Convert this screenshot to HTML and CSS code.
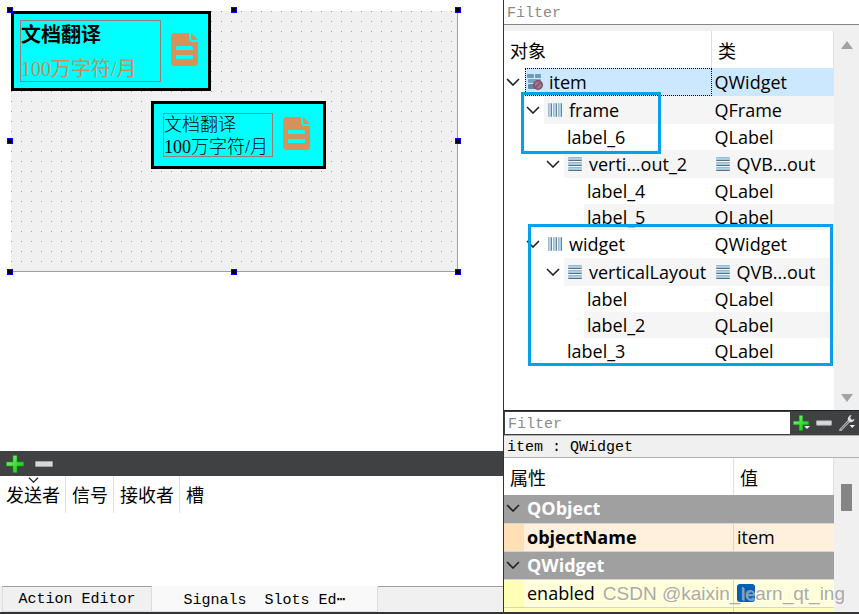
FILE: index.html
```html
<!DOCTYPE html>
<html lang="zh">
<head>
    <meta charset="UTF-8">
    <meta name="viewport" content="width=device-width, initial-scale=1.0">
    <title>item - Qt Designer</title>
    <link rel="stylesheet" href="styles.css">
</head>
<body>
    <!-- shared icons -->
    <svg class="defs" width="0" height="0" aria-hidden="true">
        <defs>
            <linearGradient id="bar" x1="0" y1="0" x2="0" y2="1">
                <stop offset="0" stop-color="#8fb0c6"/>
                <stop offset="0.5" stop-color="#b4dcf4"/>
                <stop offset="1" stop-color="#7c9db5"/>
            </linearGradient>
            <linearGradient id="barv" x1="0" y1="0" x2="1" y2="0">
                <stop offset="0" stop-color="#8fb0c6"/>
                <stop offset="0.5" stop-color="#b9e0f7"/>
                <stop offset="1" stop-color="#88a8bf"/>
            </linearGradient>
            <linearGradient id="green" x1="0" y1="0" x2="1" y2="1">
                <stop offset="0" stop-color="#a4f09a"/>
                <stop offset="0.5" stop-color="#3fe03a"/>
                <stop offset="1" stop-color="#00c800"/>
            </linearGradient>
            <symbol id="i-chevron" viewBox="0 0 14 8">
                <path d="M1 1l6 6 6-6" fill="none" stroke="#222" stroke-width="1.6"/>
            </symbol>
            <symbol id="i-vbox" viewBox="0 0 16 16">
                <g fill="url(#bar)">
                    <rect x="1" y="1" width="14" height="4" rx="1"/>
                    <rect x="1" y="6" width="14" height="4" rx="1"/>
                    <rect x="1" y="11" width="14" height="4" rx="1"/>
                </g>
                <path d="M1.500 4.500h13M1.500 9.500h13M1.500 14.500h13" stroke="#5d7080" stroke-width="1"/>
            </symbol>
            <symbol id="i-hbox" viewBox="0 0 16 16">
                <g fill="url(#barv)">
                    <rect x="1" y="1" width="4" height="14" rx="1"/>
                    <rect x="6" y="1" width="4" height="14" rx="1"/>
                    <rect x="11" y="1" width="4" height="14" rx="1"/>
                </g>
                <path d="M4.500 1.500v13M9.500 1.500v13M14.500 1.500v13" stroke="#6b8092" stroke-width="1"/>
            </symbol>
            <symbol id="i-broken" viewBox="0 0 16 16">
                <rect x="0" y="0" width="7" height="4" rx="1" fill="#6b9abd"/>
                <rect x="8" y="0" width="6" height="4" rx="1" fill="#6b9abd"/>
                <rect x="1" y="5" width="13" height="4" rx="1" fill="#76a5c8"/>
                <rect x="1" y="10" width="9" height="5" rx="1" fill="#5e87a8"/>
                <circle cx="11" cy="11" r="4.200" fill="#8d7f9c" stroke="#94495c" stroke-width="1.600"/>
                <path d="M8.500 13.500l5-5" stroke="#94495c" stroke-width="1.500"/>
            </symbol>
            <symbol id="i-plus" viewBox="0 0 18 18">
                <path d="M7 0.500h4v6.500h6.500v4h-6.500v6.500h-4v-6.500h-6.500v-4h6.500z" fill="url(#green)" stroke="#1fa01c" stroke-width="0.600"/>
            </symbol>
            <symbol id="i-minus" viewBox="0 0 18 18">
                <rect x="0.500" y="6.500" width="17" height="5" rx="0.500" fill="#d8d8d8" stroke="#aaa" stroke-width="0.800"/>
            </symbol>
            <symbol id="i-doc" viewBox="0 0 27 33">
                <path fill="#d69059" fill-rule="evenodd" d="M4 0H18V5Q18 9 22 9H27V29Q27 33 23 33H4Q0 33 0 29V4Q0 0 4 0ZM6 13Q5 13 5 15V17H22V15Q22 13 20 13ZM5 22V26H22V22Z"/>
                <path fill="#d69059" d="M20 0L27 7H21Q20 7 20 5Z"/>
            </symbol>
            <symbol id="i-wrench" viewBox="0 0 16 16">
                <path d="M1.500 15L10 6" stroke="#b4b4b4" stroke-width="2.600" stroke-linecap="round"/>
                <path d="M2 14.500L9.500 6.500" stroke="#55585a" stroke-width="0.900"/>
                <path d="M12.500 0Q8.500 0.800 8.800 5L11 7.300Q15 7.500 15.500 3.800L13 5L11.200 2.800Z" fill="#dcdcdc"/>
                <path d="M10.500 10h5.500l-2.750 3z" fill="#eee"/>
            </symbol>
        </defs>
    </svg>

    <div class="app">
        <main class="left">
            <div class="workspace">
                <div class="form">
                    <div class="card card-frame">
                        <div class="card-text">
                            <div class="card-title">文档翻译</div>
                            <div class="card-sub">100万字符/月</div>
                        </div>
                        <svg class="doc"><use href="#i-doc"/></svg>
                    </div>
                    <div class="card card-widget">
                        <div class="card-text">
                            <div>文档翻译</div>
                            <div>100万字符/月</div>
                        </div>
                        <svg class="doc"><use href="#i-doc"/></svg>
                    </div>
                    <i class="handle top start"></i>
                    <i class="handle top center"></i>
                    <i class="handle top end"></i>
                    <i class="handle middle start"></i>
                    <i class="handle middle end"></i>
                    <i class="handle bottom start"></i>
                    <i class="handle bottom center"></i>
                    <i class="handle bottom end"></i>
                </div>
            </div>

            <section class="signals">
                <div class="toolbar">
                    <button type="button" aria-label="Add"><svg class="icon-lg"><use href="#i-plus"/></svg></button>
                    <button type="button" aria-label="Remove"><svg class="icon-lg"><use href="#i-minus"/></svg></button>
                </div>
                <table class="connections">
                    <thead>
                        <tr>
                            <th>发送者<svg class="sort"><use href="#i-chevron"/></svg></th>
                            <th>信号</th>
                            <th>接收者</th>
                            <th>槽</th>
                        </tr>
                    </thead>
                </table>
                <div class="tabs">
                    <button type="button" class="tab">Action Editor</button>
                    <button type="button" class="tab active">Signals&nbsp; Slots Ed⋯</button>
                    <span class="tabs-rest"></span>
                </div>
            </section>
        </main>

        <aside class="right">
            <section class="inspector">
                <input class="filter" type="text" placeholder="Filter" aria-label="Filter objects">
                <div class="pane">
                    <div class="pane-body">
                        <table class="tree">
                            <colgroup><col><col class="col-class"></colgroup>
                            <thead>
                                <tr><th>对象</th><th>类</th></tr>
                            </thead>
                            <tbody>
                                <tr class="tall selected">
                                    <td class="d0"><svg class="chev"><use href="#i-chevron"/></svg><div class="cell focus"><svg class="icon"><use href="#i-broken"/></svg>item</div></td>
                                    <td><div class="cell">QWidget</div></td>
                                </tr>
                                <tr class="tall alt">
                                    <td class="d1"><svg class="chev"><use href="#i-chevron"/></svg><div class="cell"><svg class="icon"><use href="#i-hbox"/></svg>frame</div></td>
                                    <td><div class="cell">QFrame</div></td>
                                </tr>
                                <tr>
                                    <td class="d2"><div class="cell">label_6</div></td>
                                    <td><div class="cell">QLabel</div></td>
                                </tr>
                                <tr class="tall alt">
                                    <td class="d2"><svg class="chev"><use href="#i-chevron"/></svg><div class="cell"><svg class="icon"><use href="#i-vbox"/></svg>verti...out_2</div></td>
                                    <td><div class="cell"><svg class="icon"><use href="#i-vbox"/></svg>QVB...out</div></td>
                                </tr>
                                <tr>
                                    <td class="d3"><div class="cell">label_4</div></td>
                                    <td><div class="cell">QLabel</div></td>
                                </tr>
                                <tr class="alt">
                                    <td class="d3"><div class="cell">label_5</div></td>
                                    <td><div class="cell">QLabel</div></td>
                                </tr>
                                <tr class="tall">
                                    <td class="d1"><svg class="chev"><use href="#i-chevron"/></svg><div class="cell"><svg class="icon"><use href="#i-hbox"/></svg>widget</div></td>
                                    <td><div class="cell">QWidget</div></td>
                                </tr>
                                <tr class="tall alt">
                                    <td class="d2"><svg class="chev"><use href="#i-chevron"/></svg><div class="cell"><svg class="icon"><use href="#i-vbox"/></svg>verticalLayout</div></td>
                                    <td><div class="cell"><svg class="icon"><use href="#i-vbox"/></svg>QVB...out</div></td>
                                </tr>
                                <tr>
                                    <td class="d3"><div class="cell">label</div></td>
                                    <td><div class="cell">QLabel</div></td>
                                </tr>
                                <tr class="alt">
                                    <td class="d3"><div class="cell">label_2</div></td>
                                    <td><div class="cell">QLabel</div></td>
                                </tr>
                                <tr>
                                    <td class="d2"><div class="cell">label_3</div></td>
                                    <td><div class="cell">QLabel</div></td>
                                </tr>
                            </tbody>
                        </table>
                        <div class="mark mark-frame"></div>
                        <div class="mark mark-widget"></div>
                    </div>
                    <div class="scrollbar">
                        <span class="arrow up"></span>
                        <span class="arrow down"></span>
                    </div>
                </div>
            </section>

            <section class="properties">
                <div class="toolbar prop-bar">
                    <input class="filter" type="text" placeholder="Filter" aria-label="Filter properties">
                    <button type="button" aria-label="Add property"><svg class="icon"><use href="#i-plus"/></svg><i class="caret"></i></button>
                    <button type="button" aria-label="Remove property"><svg class="icon"><use href="#i-minus"/></svg></button>
                    <button type="button" aria-label="Configure"><svg class="icon"><use href="#i-wrench"/></svg></button>
                </div>
                <div class="object-name">item : QWidget</div>
                <div class="pane">
                    <div class="pane-body">
                        <table class="props">
                            <colgroup><col><col class="col-value"></colgroup>
                            <thead>
                                <tr><th>属性</th><th>值</th></tr>
                            </thead>
                            <tbody>
                                <tr class="group">
                                    <td colspan="2"><svg class="chev"><use href="#i-chevron"/></svg>QObject</td>
                                </tr>
                                <tr class="orange">
                                    <td><b>objectName</b></td>
                                    <td>item</td>
                                </tr>
                                <tr class="group">
                                    <td colspan="2"><svg class="chev"><use href="#i-chevron"/></svg>QWidget</td>
                                </tr>
                                <tr class="yellow">
                                    <td><label for="enabled">enabled</label></td>
                                    <td><input type="checkbox" id="enabled" checked></td>
                                </tr>
                                <tr class="yellow next">
                                    <td></td>
                                    <td></td>
                                </tr>
                            </tbody>
                        </table>
                    </div>
                    <div class="scrollbar">
                        <span class="thumb"></span>
                    </div>
                </div>
                <div class="watermark">CSDN @kaixin_learn_qt_ing</div>
            </section>
        </aside>
    </div>
</body>
</html>
```
FILE: styles.css
```css
* {
    box-sizing: border-box;
}
body {
    margin: 0;
    font-family: "Open Sans", "Noto Sans CJK SC", sans-serif;
    font-size: 18px;
    color: #000;
    background: #fff;
}
button {
    padding: 0;
    border: none;
    background: none;
    color: inherit;
}
svg {
    display: block;
    flex: none;
}
.defs {
    position: absolute;
}
.app {
    display: grid;
    grid-template-columns: minmax(0, 1fr) 356px;
    height: 100vh;
    overflow: hidden;
    border-bottom: 2px solid #333234;
}
.left,
.right,
.inspector,
.properties {
    display: flex;
    flex-direction: column;
    min-height: 0;
}
.icon {
    width: 16px;
    height: 16px;
}
.icon-lg {
    width: 18px;
    height: 18px;
}

/* form being edited */
.workspace {
    flex: 1;
    padding: 11px;
}
.form {
    position: relative;
    width: 447px;
    height: 261px;
    border-right: 1px solid #a0a0a0;
    border-bottom: 1px solid #a0a0a0;
    background: #f0f0f0 conic-gradient(from 270deg at 1px 1px, #a0a0a0 90deg, transparent 0) 0 0 / 10px 10px;
}
.card {
    position: absolute;
    display: flex;
    align-items: center;
    gap: 10px;
    border: 3px solid #000;
    background: #0ff;
    font-family: "Liberation Serif", "Noto Sans CJK SC", serif;
    font-size: 18px;
    white-space: nowrap;
}
.card-frame {
    top: 0;
    left: 0;
    width: 200px;
    height: 80px;
    padding: 6px;
    font-size: 20px;
    line-height: 28px;
}
.card-widget {
    top: 90px;
    left: 140px;
    width: 175px;
    height: 68px;
    padding: 9px;
}
.card-text {
    flex: none;
    width: 110px;
    border: 1px solid #967f7b;
}
.card-frame .card-text {
    width: 141px;
    height: 62px;
}
.card-title {
    font-weight: bold;
}
.card-sub {
    padding-top: 6px;
    color: #c98d62;
}
.card-widget .card-text {
    height: 44px;
    font-weight: 300;
    line-height: 22px;
}
.doc {
    width: 27px;
    height: 33px;
    margin-bottom: 3px;
}
.handle {
    position: absolute;
    width: 6px;
    height: 6px;
    border: 1px solid #00f;
    background: #000;
}
.handle.top { top: -4px; }
.handle.middle { top: calc(50% - 3px); }
.handle.bottom { bottom: -4px; }
.handle.start { left: -4px; }
.handle.center { left: calc(50% - 3px); }
.handle.end { right: -4px; }

/* toolbars */
.toolbar {
    display: flex;
    align-items: center;
    gap: 11px;
    height: 25px;
    padding: 0 6px;
    background: #404142;
}
.filter {
    width: 100%;
    height: 25px;
    padding: 3px 3px 0;
    border: none;
    border-bottom: 1px solid #868686;
    border-radius: 0;
    background: #fff;
    font-family: "Liberation Mono", monospace;
    font-size: 15px;
    outline: none;
}
.filter::placeholder {
    color: #8a8a8a;
}

/* signal and slot editor */
.connections {
    border-collapse: separate;
    border-spacing: 0;
}
.connections th {
    position: relative;
    height: 37px;
    padding: 0 5px 0 6px;
    border-right: 1px solid #e0e0e0;
    font-weight: normal;
    line-height: 24px;
}
.connections th:last-child {
    border-right: none;
}
.sort {
    position: absolute;
    top: 1px;
    left: 28px;
    width: 11px;
    height: 6px;
}
.tabs {
    display: flex;
    height: 26px;
    margin-top: 73px;
    padding-left: 2px;
    background: #f0f0f0;
}
.tab,
.tabs-rest {
    border-top: 1px solid #a0a0a0;
}
.tab {
    width: 150px;
    border-right: 1px solid #dcdcdc;
    border-bottom: 1px solid #dcdcdc;
    border-left: 1px solid #dcdcdc;
    background: #f0f0f0;
    font-family: "Liberation Mono", monospace;
    font-size: 15px;
    white-space: nowrap;
}
.tab.active {
    width: 226px;
    border-top-color: #f9f9f9;
    border-left: none;
    background: #f9f9f9;
}
.tabs-rest {
    flex: 1;
}

/* right docks */
.right {
    border-left: 1px solid #333;
    background: #f0f0f0;
}
.inspector {
    flex: 1;
}
.pane {
    display: flex;
    flex: 1;
    min-height: 0;
}
.pane-body {
    position: relative;
    flex: 1;
    overflow: hidden;
    background: #fff;
}
.inspector .pane {
    margin-top: 6px;
}
.tree,
.props {
    width: 100%;
    table-layout: fixed;
    border-collapse: collapse;
    white-space: nowrap;
}
.col-class {
    width: 122px;
}
.col-value {
    width: 100px;
}
th {
    height: 37px;
    padding: 0 6px;
    border-right: 1px solid #e0e0e0;
    font-weight: normal;
    text-align: left;
}
td {
    padding: 0;
}
.tree td {
    position: relative;
    height: 26px;
    line-height: 26px;
}
.tree .tall td {
    height: 28px;
    line-height: 28px;
}
.tree .d0 { padding-left: 20px; }
.tree .d1 { padding-left: 40px; }
.tree .d2 { padding-left: 60px; }
.tree .d3 { padding-left: 80px; }
.cell {
    display: flex;
    align-items: center;
    gap: 6px;
    height: 26px;
    padding-left: 3px;
}
.tall .cell {
    height: 28px;
}
.alt .cell {
    background: #f5f5f5;
}
.selected .cell {
    background: #cce8ff;
}
.cell.focus {
    margin-left: 1px;
    padding-left: 1px;
    border: 1px dotted #000;
}
.chev {
    width: 14px;
    height: 8px;
}
.tree .chev {
    position: absolute;
    top: 10px;
}
.d0 .chev { left: 2px; }
.d1 .chev { left: 22px; }
.d2 .chev { left: 42px; }
.mark {
    position: absolute;
    border: 3px solid #00a2e8;
}
.mark-frame {
    top: 61px;
    left: 17px;
    width: 140px;
    height: 62px;
}
.mark-widget {
    top: 193px;
    left: 24px;
    width: 305px;
    height: 142px;
}
.scrollbar {
    display: flex;
    flex-direction: column;
    align-items: center;
    justify-content: space-between;
    width: 25px;
    padding: 10px 0 8px;
    background: #f0f0f0;
}
.arrow {
    border: 6px solid transparent;
}
.arrow.up {
    border-top: none;
    border-bottom: 8px solid #a3a3a3;
}
.arrow.down {
    border-top: 8px solid #a3a3a3;
    border-bottom: none;
}

/* property editor */
.properties {
    position: relative;
    height: 202px;
}
.prop-bar {
    gap: 7px;
    padding: 1px 4px 1px 1px;
    border-top: 1px solid #222;
}
.prop-bar .filter {
    flex: 1;
    min-width: 0;
    height: 22px;
    margin-right: -4px;
    border-bottom: none;
}
.prop-bar button {
    position: relative;
}
.caret {
    position: absolute;
    right: -1px;
    bottom: 2px;
    border: 3px solid transparent;
    border-top-color: #eee;
    border-bottom: none;
}
.object-name {
    height: 23px;
    padding-left: 3px;
    border: 1px solid #b0b0b0;
    border-right: none;
    border-left: none;
    font-family: "Liberation Mono", monospace;
    font-size: 15px;
    line-height: 23px;
}
.props td {
    height: 28px;
    padding: 0 3px;
    border-right: 1px solid #d4d4d4;
    border-bottom: 1px solid #d4d4d4;
    line-height: 27px;
}
.props td:last-child {
    border-right: none;
}
.props td:first-child {
    padding-left: 23px;
}
.props .group td {
    position: relative;
    background: #a0a0a0;
    color: #fff;
    font-weight: bold;
}
.props .chev {
    position: absolute;
    top: 9px;
    left: 2px;
}
.orange td {
    background: #fff0de;
}
.orange td:first-child {
    background: linear-gradient(to right, #ffdfb5 20px, #fff0de 20px);
}
.yellow td {
    background: #ffffdc;
}
.yellow td:first-child {
    background: linear-gradient(to right, #ffffb5 20px, #ffffdc 20px);
}
.yellow.next td {
    background: #ffffbf;
}
input[type="checkbox"] {
    appearance: none;
    display: block;
    width: 18px;
    height: 18px;
    margin: 0;
    border-radius: 3px;
    background: #005fb8;
}
.properties .scrollbar {
    padding-top: 26px;
}
.thumb {
    width: 11px;
    height: 27px;
    background: #858585;
}
.watermark {
    position: absolute;
    right: 14px;
    bottom: 6px;
    color: rgba(160, 160, 160, 0.9);
    font-family: "Liberation Sans", sans-serif;
    font-size: 19px;
    line-height: 24px;
    text-shadow: 1px 1px 0 rgba(255, 255, 255, 0.4);
}
```
